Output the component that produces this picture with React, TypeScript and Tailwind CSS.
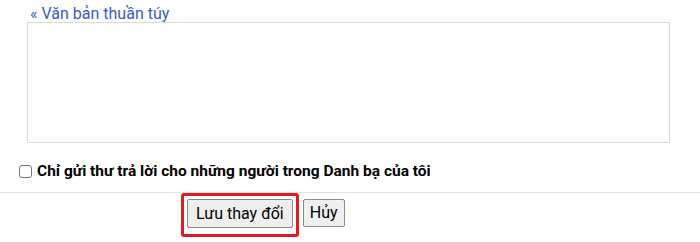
export default function App() {
  return (
    <div className="w-[700px] h-[242px] bg-white overflow-hidden font-['Roboto','Liberation_Sans',sans-serif] text-black">
      <div className="pl-[30px] pt-[2px] h-[22px]">
        <a className="text-[16px] leading-[20px] text-[#3b5cc0] cursor-pointer">« Văn bản thuần túy</a>
      </div>
      <div className="ml-[27px] w-[643px] h-[121px] border border-[#dcdcdc] bg-white" />
      <div className="flex items-center pl-[19px] mt-[21px] h-[14px] gap-[5px]">
        <span className="w-[13px] h-[13px] border border-[#767676] rounded-[3px] bg-white" />
        <span className="text-[15.5px] font-bold leading-[14px] whitespace-nowrap">
          Chỉ gửi thư trả lời cho những người trong Danh bạ của tôi
        </span>
      </div>
      <div className="mt-[14px] border-t border-[#e3e3e3]" />
      <div className="flex items-start pl-[181px] gap-[4px]">
        <div className="border-[3px] border-[#e01b24] rounded-[3px] px-[3px] pt-[3px] pb-[6px]">
          <button className="h-[29px] px-[8px] bg-[#efefef] border border-[#8a8a8a] rounded-[2px] text-[16px] leading-none text-black">
            Lưu thay đổi
          </button>
        </div>
        <button className="mt-[6px] h-[28px] px-[6px] bg-[#efefef] border border-[#8a8a8a] rounded-[2px] text-[16px] leading-none text-black">
          Hủy
        </button>
      </div>
    </div>
  );
}
